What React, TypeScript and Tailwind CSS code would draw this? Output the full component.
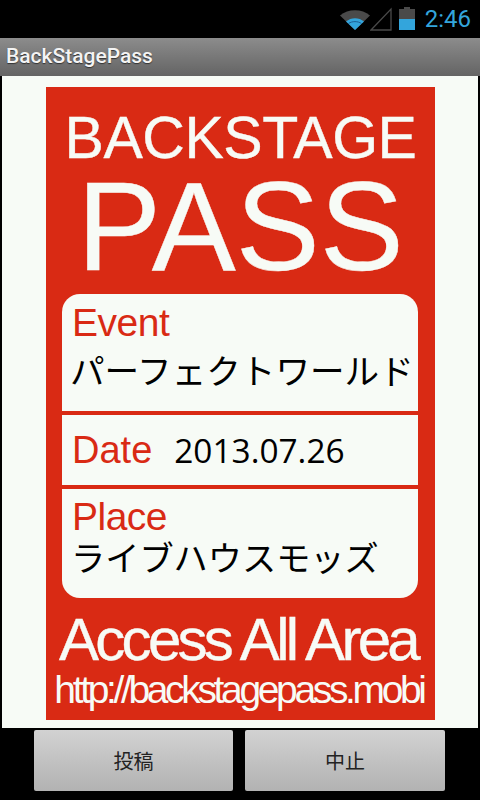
import React from 'react';

const SANS = 'font-["Liberation_Sans","Noto_Sans_CJK_JP",sans-serif]';

const StatusBar = () => (
  <div className="h-[38px] bg-black flex items-center justify-end">
    <svg width="32" height="22" viewBox="0 0 32 22" className="mr-[-1px] mt-[-1px]">
      <path d="M1 7.5 C9 0.5 23 0.5 31 7.5 L16 22 Z" fill="#4a4a4a" />
      <path d="M7 13.5 C12 9 20 9 25 13.5 L16 22 Z" fill="#33a5dc" />
      <path d="M9.5 15.5 C13 13 19 13 22.5 15.5" stroke="#1c5f94" strokeWidth="1" fill="none" />
    </svg>
    <svg width="22" height="24" viewBox="0 0 22 24" className="mt-[-1px]">
      <path d="M1 23 L21 2 L21 23 Z" fill="none" stroke="#4a4a4a" strokeWidth="1.3" />
    </svg>
    <svg width="16" height="25" viewBox="0 0 16 25" className="ml-[7px] mt-[-1px]">
      <rect x="5" y="1" width="6" height="3" fill="#4a4a4a" />
      <rect x="0" y="3" width="16" height="10" fill="#4a4a4a" />
      <rect x="0" y="13" width="16" height="11" fill="#33a5dc" />
    </svg>
    <span className='ml-[10px] mr-[9px] text-[24px] leading-none text-[#33a5dc] font-["Roboto",sans-serif]'>2:46</span>
  </div>
);

const TitleBar = () => (
  <div className="h-[38px] bg-gradient-to-b from-[#8c8c8c] to-[#646464] flex items-center pl-[6px]">
    <span className='text-[21px] font-medium text-[#f4f4f4] font-["Roboto",sans-serif] [text-shadow:0_1px_1px_#333]'>BackStagePass</span>
  </div>
);

const Pass = () => (
  <div className={`w-[389px] h-[633px] bg-[#d92a14] ml-[44px] mt-[11px] flex flex-col items-center ${SANS}`}>
    <div className="mt-[19px] h-[64px] text-[59px] leading-[64px] text-[#f7fbf6] tracking-[-0.5px] [-webkit-text-stroke:0.4px_#f7fbf6] whitespace-nowrap">BACKSTAGE</div>
    <div className="mt-[-2px] h-[118px] text-[126px] leading-[118px] text-[#f7fbf6] [-webkit-text-stroke:0.4px_#f7fbf6]">PASS</div>
    <div className="mt-[8px] self-start ml-[16px] w-[356px] h-[304px] rounded-[18px] bg-[#f7fbf6] flex flex-col overflow-hidden">
      <div className="h-[117px] pl-[10px] flex flex-col">
        <div className="mt-[6px] h-[46px] text-[39px] leading-[46px] text-[#d92a14] tracking-[-0.5px]">Event</div>
        <div className="mt-[4px] ml-[-2px] text-[34.6px] leading-[44px] text-black whitespace-nowrap">パーフェクトワールド</div>
      </div>
      <div className="h-[4px] bg-[#d92a14]" />
      <div className="h-[70px] pl-[10px] flex items-center">
        <span className="text-[38px] leading-[44px] text-[#d92a14]">Date</span>
        <span className='ml-[22px] text-[33.4px] leading-[44px] text-black font-["Open_Sans",sans-serif]'>2013.07.26</span>
      </div>
      <div className="h-[4px] bg-[#d92a14]" />
      <div className="pl-[10px] flex flex-col">
        <div className="mt-[6px] text-[39px] leading-[44px] text-[#d92a14] tracking-[-0.5px]">Place</div>
        <div className="mt-[-2px] ml-[-1px] text-[34.2px] leading-[44px] text-black whitespace-nowrap">ライブハウスモッズ</div>
      </div>
    </div>
    <div className="mt-[14px] ml-[-5px] h-[56px] text-[60px] leading-[56px] text-[#f7fbf6] tracking-[-3.7px] [-webkit-text-stroke:0.4px_#f7fbf6] whitespace-nowrap">Access All Area</div>
    <div className="mt-[1px] ml-[-3px] text-[39px] leading-[42px] text-[#f7fbf6] tracking-[-3.35px] whitespace-nowrap">http://backstagepass.mobi</div>
  </div>
);

const Btn = ({ label, className }: { label: string; className: string }) => (
  <div className={`h-[61px] pt-[2px] rounded-[2px] bg-gradient-to-b from-[#d2d2d2] to-[#b2b2b2] flex items-center justify-center text-[20px] text-[#222] ${SANS} ${className}`}>
    {label}
  </div>
);

export default function App() {
  return (
    <div className="w-[480px] h-[800px] bg-black flex flex-col overflow-hidden">
      <StatusBar />
      <TitleBar />
      <div className="h-[652px] mx-[2px] bg-[#f7fbf6] overflow-hidden">
        <Pass />
      </div>
      <div className="flex mt-[2px] pl-[34px]">
        <Btn label="投稿" className="w-[199px]" />
        <Btn label="中止" className="w-[200px] ml-[12px]" />
      </div>
    </div>
  );
}
